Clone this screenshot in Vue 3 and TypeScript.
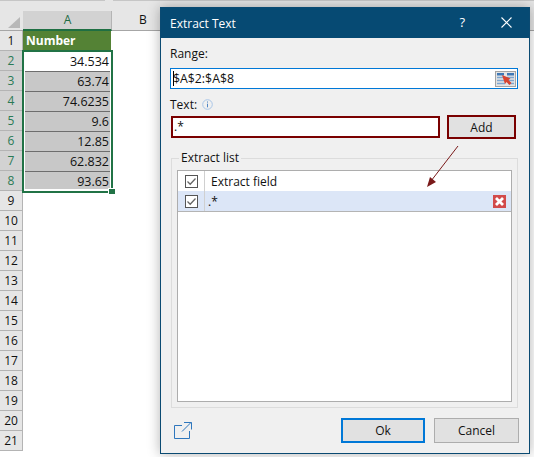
<script setup lang="ts">
const values = ['34.534', '63.74', '74.6235', '9.6', '12.85', '62.832', '93.65']
const rowNums = Array.from({ length: 21 }, (_, i) => i + 1)
</script>

<template>
  <div class="page">
    <div class="ribbon-edge">
      <span class="seg-a"></span>
      <span class="seg-b"></span>
    </div>
    <div class="sheet">
      <div class="head-row">
        <div class="corner"><svg width="12" height="11" viewBox="0 0 12 11"><path d="M12 0V11H0Z" fill="#b8b8b8"/></svg></div>
        <div class="col-a">A</div>
        <div class="col-b">B</div>
      </div>
      <div class="body">
        <div class="row-nums">
          <div v-for="n in rowNums" :key="n" class="num" :class="{ sel: n >= 2 && n <= 8 }">{{ n }}</div>
        </div>
        <div class="cells">
          <div class="number-head">Number</div>
          <div class="selection">
            <div v-for="(v, i) in values" :key="v" class="cell" :class="{ grey: i > 0 }">{{ v }}</div>
            <span class="fill-handle"></span>
          </div>
        </div>
      </div>
    </div>

    <section class="dialog">
      <header class="title-bar">
        <span class="title">Extract Text</span>
        <span class="help">?</span>
        <svg class="close" width="11" height="11" viewBox="0 0 11 11"><path d="M0.5 0.5L10.5 10.5M10.5 0.5L0.5 10.5" stroke="#fff" stroke-width="1.1"/></svg>
      </header>
      <div class="content">
        <label class="lbl">Range:</label>
        <div class="range-input">
          <span class="caret"></span>
          <span class="range-text">$A$2:$A$8</span>
          <span class="range-btn">
            <svg width="17" height="12" viewBox="0 0 17 12">
              <rect x="0" y="0" width="7" height="2.5" fill="#3f78b5"/>
              <rect x="10" y="0" width="7" height="2.5" fill="#3f78b5"/>
              <path d="M0 4.5H7M0 7.5H7M0 10.5H8M10 4.5H17M11 7.5H17M11 10.5H17" stroke="#7fa6d0" stroke-width="1.4"/>
              <path d="M5 2L13.5 5.5L11.5 7L14.5 10L12.5 12L9.5 9L8 11Z" fill="#d8432f"/>
            </svg>
          </span>
        </div>
        <div class="text-label">
          <label class="lbl">Text:</label>
          <svg width="11" height="11" viewBox="0 0 11 11"><circle cx="5.5" cy="5.5" r="4.8" fill="none" stroke="#a9c6e8"/><path d="M5.5 2.5V3.6M5.5 4.7V8.3" stroke="#4f86c6"/></svg>
        </div>
        <div class="text-row">
          <div class="text-input">.*</div>
          <button class="add-btn">Add</button>
        </div>
        <fieldset class="group">
          <legend>Extract list</legend>
          <div class="list">
            <div class="list-row">
              <span class="check-col"><svg class="check" width="13" height="13" viewBox="0 0 13 13"><rect x="0.5" y="0.5" width="12" height="12" fill="#fff" stroke="#555"/><path d="M2.5 6.5L5.2 9.2L10.5 3.5" fill="none" stroke="#666" stroke-width="1.3"/></svg></span>
              <span class="field">Extract field</span>
            </div>
            <div class="list-row active">
              <span class="check-col"><svg class="check" width="13" height="13" viewBox="0 0 13 13"><rect x="0.5" y="0.5" width="12" height="12" fill="#fff" stroke="#555"/><path d="M2.5 6.5L5.2 9.2L10.5 3.5" fill="none" stroke="#666" stroke-width="1.3"/></svg></span>
              <span class="field pattern">.*</span>
              <svg class="remove" width="13" height="13" viewBox="0 0 13 13"><rect width="13" height="13" fill="#d24b4b"/><path d="M3 3L10 10M10 3L3 10" stroke="#fff" stroke-width="2.8"/></svg>
            </div>
          </div>
        </fieldset>
        <footer class="foot">
          <svg class="share" width="18" height="17" viewBox="0 0 18 17"><path d="M8 3.5H0.5V16.5H15.5V9" fill="none" stroke="#2f77bd"/><path d="M8 9.5L17 0.5M10 0.5H17.5V7.5" fill="none" stroke="#2f77bd"/></svg>
          <button class="btn ok">Ok</button>
          <button class="btn">Cancel</button>
        </footer>
      </div>
    </section>

    <svg class="arrow" width="40" height="50" viewBox="0 0 40 50">
      <path d="M31 1L4 36" stroke="#7a1a1a" stroke-width="1"/>
      <path d="M0 42L3 32L9 37Z" fill="#7a1a1a"/>
    </svg>
  </div>
</template>

<style scoped>
.page {
  position: relative;
  width: 534px;
  height: 457px;
  overflow: hidden;
  background: #fff;
  font-family: "Open Sans", "Noto Sans", sans-serif;
  color: #111;
}
.ribbon-edge {
  height: 11px;
  background: #e6e6e6;
  display: flex;
  gap: 8px;
}
.seg-a, .seg-b {
  height: 1px;
  background: #c6c6c6;
}
.seg-a { width: 105px; }
.seg-b { flex: 1; }
.head-row {
  display: flex;
  height: 19px;
  background: #e6e6e6;
  border-bottom: 1px solid #a6a6a6;
}
.corner {
  width: 23px;
  display: flex;
  align-items: flex-end;
  padding: 0 0 2px 8px;
  box-sizing: border-box;
}
.col-a, .col-b {
  font-size: 12px;
  text-align: center;
  line-height: 18px;
}
.col-a {
  width: 89px;
  height: 20px;
  box-sizing: border-box;
  padding-left: 1px;
  background: #d2d2d2;
  color: #1c6b42;
  border-right: 1px solid #b4b4b4;
  border-bottom: 2px solid #1f6f43;
}
.col-b {
  flex: 1;
  text-align: left;
  padding-left: 27px;
}
.body {
  display: flex;
}
.row-nums {
  width: 23px;
  background: #e6e6e6;
  border-right: 1px solid #b4b4b4;
  box-sizing: border-box;
}
.num {
  height: 20px;
  line-height: 20px;
  font-size: 12px;
  text-align: center;
  border-bottom: 1px solid #b4b4b4;
  box-sizing: border-box;
}
.num.sel {
  background: #d2d2d2;
  color: #2a7a55;
}
.cells {
  width: 89px;
}
.number-head {
  height: 20px;
  padding-left: 3px;
  background: #548235;
  color: #fff;
  font-weight: 700;
  font-size: 12px;
  line-height: 20px;
  box-sizing: border-box;
  margin-right: 1px;
}
.selection {
  position: relative;
  width: 91px;
  height: 143px;
  box-sizing: border-box;
  margin: -1px 0 0 -1px;
  padding: 0 1px 2px 1px;
  border: 2px solid #217346;
  background: #fff;
}
.cell {
  height: 20px;
  line-height: 19px;
  text-align: right;
  font-size: 12.5px;
  padding-right: 1px;
  box-sizing: border-box;
  border-bottom: 1px solid #6e6e6e;
}
.cell:nth-child(7) {
  height: 17px;
  border-bottom: none;
}
.cell.grey { background: #c8c8c8; }
.fill-handle {
  position: absolute;
  right: -4px;
  bottom: -3px;
  width: 6px;
  height: 5px;
  background: #217346;
  box-shadow: -1px -1px 0 #fff;
}
.dialog {
  position: absolute;
  left: 160px;
  top: 7px;
  width: 370px;
  height: 447px;
  box-sizing: border-box;
  border: 1px solid #0a4a72;
  background: #f0f0f0;
  box-shadow: 0 0 12px rgba(0, 0, 0, 0.3);
  font-size: 12px;
}
.title-bar {
  height: 30px;
  background: #064a73;
  color: #fff;
  display: flex;
  align-items: center;
  padding: 0 17px 0 9px;
  box-sizing: border-box;
}
.title { flex: 1; }
.help { margin: -2px 36px 0 0; font-size: 13px; }
.close { margin-top: -2px; }
.content {
  padding: 7px 11px 0 9px;
}
.lbl { display: block; line-height: 17px; }
.range-input {
  margin-top: 6px;
  height: 21px;
  width: 348px;
  box-sizing: border-box;
  border: 1px solid #0078d7;
  background: #fff;
  display: flex;
  align-items: center;
  padding-left: 2px;
  position: relative;
}
.caret {
  position: absolute;
  left: 2px;
  top: 2px;
  height: 15px;
  width: 1px;
  background: #000;
}
.range-text { flex: 1; font-size: 12.3px; }
.range-btn {
  width: 21px;
  height: 16px;
  margin-right: 1px;
  background: #e4e4e4;
  border: 1px solid #a4a4a4;
  box-sizing: border-box;
  display: flex;
  align-items: center;
  justify-content: center;
  overflow: hidden;
}
.text-label {
  margin-top: 5px;
  height: 20px;
  display: flex;
  align-items: center;
  gap: 5px;
}
.text-row {
  display: flex;
  align-items: center;
  gap: 7px;
  height: 24px;
  margin-top: 1px;
}
.text-input {
  width: 269px;
  height: 22px;
  margin-left: 1px;
  box-sizing: border-box;
  border: 2px solid #7a0000;
  background: #fff;
  line-height: 17px;
  padding-left: 1px;
}
.add-btn {
  width: 69px;
  height: 24px;
  box-sizing: border-box;
  border: 2px solid #7a0000;
  background: #e1e1e1;
  font: inherit;
  color: inherit;
  padding: 0;
}
.group {
  margin: 11px 0 0 1px;
  width: 347px;
  height: 258px;
  box-sizing: border-box;
  border: 1px solid #dcdcdc;
  padding: 4px 5px 5px;
  min-width: 0;
}
.group legend {
  margin-left: 2px;
  padding: 0 2px;
  line-height: 16px;
}
.list {
  height: 232px;
  box-sizing: border-box;
  border: 1px solid #adadad;
  background: #fff;
}
.list-row {
  height: 20px;
  display: flex;
  align-items: center;
}
.list-row.active {
  background: #dce6f7;
  border-bottom: 1px solid #b4b4b4;
}
.check-col {
  width: 27px;
  height: 100%;
  border-right: 1px solid #d0d0d0;
  display: flex;
  align-items: center;
  justify-content: center;
  box-sizing: border-box;
}
.field { padding-left: 6px; flex: 1; }
.pattern { padding-left: 3px; }
.remove { margin-right: 5px; }
.foot {
  display: flex;
  align-items: center;
  margin-top: 10px;
  height: 25px;
}
.share { flex: none; margin-left: 4px; margin-right: 149px; }
.btn {
  width: 85px;
  height: 25px;
  box-sizing: border-box;
  border: 1px solid #adadad;
  background: #e1e1e1;
  font: inherit;
  color: inherit;
  padding: 0;
  margin-left: 9px;
  flex: none;
}
.btn.ok {
  border: 2px solid #0078d7;
  margin-left: 0;
  width: 84px;
}
.arrow {
  position: absolute;
  left: 427px;
  top: 145px;
}
</style>
